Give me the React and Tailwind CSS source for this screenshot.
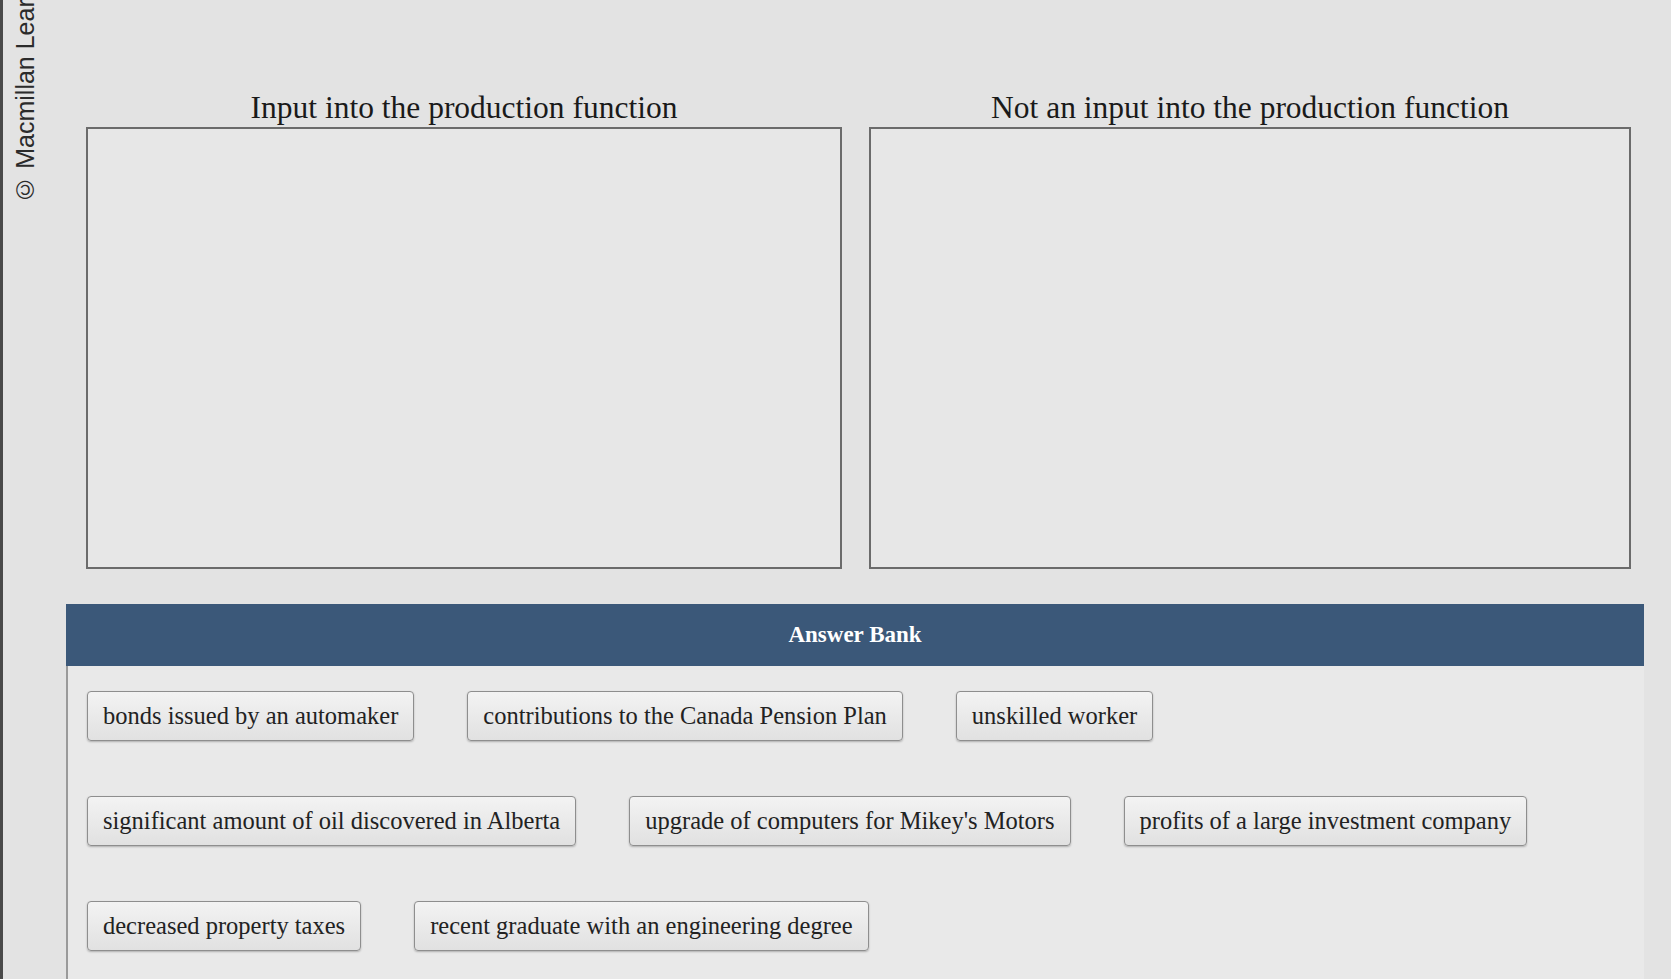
const serif = { fontFamily: '"Liberation Serif", "Times New Roman", serif' };

const rows = [
  ['bonds issued by an automaker', 'contributions to the Canada Pension Plan', 'unskilled worker'],
  ['significant amount of oil discovered in Alberta', "upgrade of computers for Mikey's Motors", 'profits of a large investment company'],
  ['decreased property taxes', 'recent graduate with an engineering degree'],
];

const Chip = ({ label }) => (
  <div className="h-[50px] flex items-center px-[15px] rounded-[4px] border border-[#8e8e8e] bg-gradient-to-b from-[#f3f3f3] to-[#e1e1e1] shadow-[0_1px_2px_rgba(0,0,0,0.25)] text-[24.5px] text-[#222] whitespace-nowrap">
    {label}
  </div>
);

const DropZone = ({ title, width }) => (
  <div className="flex flex-col items-center" style={{ width }}>
    <h2 className="text-[31.5px] leading-[34px] text-[#1a1a1a] mb-[2px]">{title}</h2>
    <div className="w-full h-[442px] border-2 border-[#6b6b6b] bg-[#e7e7e7]" />
  </div>
);

export default function App() {
  return (
    <div className="min-h-screen h-[979px] w-full overflow-hidden flex bg-[#e3e3e3] border-l-[3px] border-[#4a4a4a]" style={serif}>
      <div className="w-[46px] shrink-0 h-[204px] flex flex-col justify-end items-center overflow-hidden">
        <span
          className="[writing-mode:vertical-rl] rotate-180 text-[25px] text-[#2b2b2b] whitespace-nowrap"
          style={{ fontFamily: '"Liberation Sans", Arial, sans-serif' }}
        >
          © Macmillan Learning
        </span>
      </div>

      <div className="flex-1 flex flex-col">
        <div className="flex gap-[27px] pl-[37px] pt-[91px]">
          <DropZone title="Input into the production function" width={756} />
          <DropZone title="Not an input into the production function" width={762} />
        </div>

        <div className="mt-[35px] ml-[17px] w-[1578px] flex-1 flex flex-col">
          <div className="h-[62px] bg-[#3b5879] flex items-center justify-center">
            <span className="text-white font-bold text-[23px]">Answer Bank</span>
          </div>
          <div className="flex-1 bg-[#e9e9e9] border-l-2 border-[#9a9a9a] pl-[19px] pt-[25px] flex flex-col gap-[55px]">
            {rows.map((row, i) => (
              <div key={i} className="flex gap-[53px]">
                {row.map((label) => (
                  <Chip key={label} label={label} />
                ))}
              </div>
            ))}
          </div>
        </div>
      </div>
    </div>
  );
}
